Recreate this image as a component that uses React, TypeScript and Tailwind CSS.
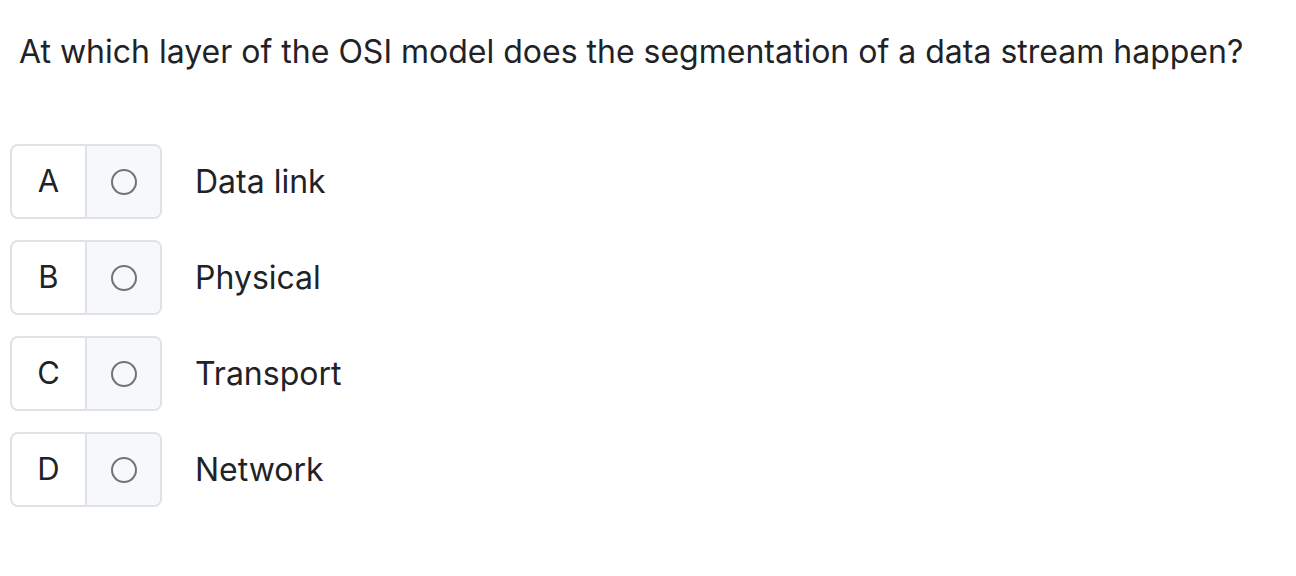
const options = [
  { letter: "A", label: "Data link" },
  { letter: "B", label: "Physical" },
  { letter: "C", label: "Transport" },
  { letter: "D", label: "Network" },
];

export default function App() {
  return (
    <div className="min-h-screen bg-white text-[#1f2328] font-['Inter',sans-serif]">
      <div className="pl-[19px] pt-[30px]">
        <h1 className="text-[32px] leading-[44px] font-normal">
          At which layer of the OSI model does the segmentation of a data stream happen?
        </h1>
      </div>
      <div className="mt-[70px] pl-[10px] flex flex-col gap-[21px]">
        {options.map((o) => (
          <div key={o.letter} className="flex items-center">
            <div className="flex h-[75px] w-[152px] rounded-[8px] border-2 border-[#dfe2e6] overflow-hidden">
              <div className="w-[73px] flex items-center justify-center text-[31px]">{o.letter}</div>
              <div className="flex-1 flex items-center justify-center bg-[#f6f8fa] border-l-2 border-[#dfe2e6]">
                <span className="block w-[26px] h-[26px] rounded-full border-2 border-[#707377]" />
              </div>
            </div>
            <span className="ml-[33px] text-[32px]">{o.label}</span>
          </div>
        ))}
      </div>
    </div>
  );
}
